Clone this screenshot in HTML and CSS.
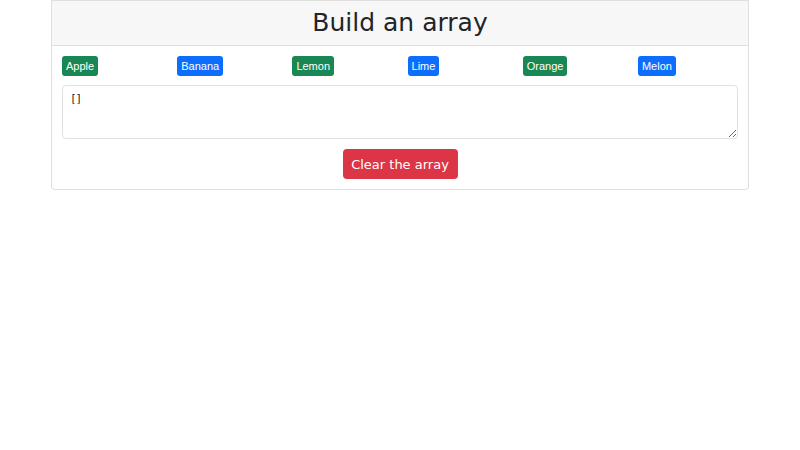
FILE: index.html
```html
<!DOCTYPE html>
<html lang="en">
<head>
  <meta charset="UTF-8" />
  <meta name="viewport" content="width=device-width, initial-scale=1.0"/>
  <title>Build an array</title>
  <link rel="stylesheet" href="styles.css">
</head>
<body>
  <div class="container">
    <div class="card">
      <div class="card-header">
        <h3 class="title">Build an array</h3>
      </div>
      <div class="card-body">
        <div class="fruits">
          <div class="fruit-col"><button class="fruit-btn green">Apple</button></div>
          <div class="fruit-col"><button class="fruit-btn blue">Banana</button></div>
          <div class="fruit-col"><button class="fruit-btn green">Lemon</button></div>
          <div class="fruit-col"><button class="fruit-btn blue">Lime</button></div>
          <div class="fruit-col"><button class="fruit-btn green">Orange</button></div>
          <div class="fruit-col"><button class="fruit-btn blue">Melon</button></div>
        </div>
        <textarea class="output" id="output" readonly>[]</textarea>
        <div class="actions">
          <button class="btn-clear" id="clearBtn">Clear the array</button>
        </div>
      </div>
    </div>
  </div>
  <script>
    let fruits = [];
    const output = document.getElementById("output");

    function render() {
      output.value = JSON.stringify(fruits);
    }

    document.querySelectorAll(".fruit-btn").forEach((btn) => {
      btn.addEventListener("click", () => {
        fruits.push(btn.textContent);
        render();
      });
    });

    document.getElementById("clearBtn").addEventListener("click", () => {
      fruits = [];
      render();
    });
  </script>
</body>
</html>
```

FILE: styles.css
```css
* { margin: 0; padding: 0; box-sizing: border-box; }
body {
  font-family: "DejaVu Sans", sans-serif;
  color: #212529;
  background: #fff;
}
.container {
  width: 698px;
  margin: 0 auto;
}
.card {
  border: 1px solid #dfdfdf;
  border-top: none;
  border-radius: 0 0 4px 4px;
}
.card-header {
  background: #f7f7f7;
  border-top: 1px solid #dfdfdf;
  border-bottom: 1px solid #dfdfdf;
  height: 46px;
  display: flex;
  align-items: center;
  justify-content: center;
}
.title {
  font-size: 25px;
  font-weight: 400;
  line-height: 1.2;
}
.card-body {
  padding: 9px 10px 10px;
}
.fruits {
  display: grid;
  grid-template-columns: repeat(6, 115.2px);
}
.fruit-btn {
  font-family: "Liberation Sans", Arial, sans-serif;
  font-size: 11px;
  color: #fff;
  border: none;
  border-radius: 3px;
  height: 20px;
  padding: 0 4px;
  cursor: pointer;
}
.green { background: #198754; }
.blue { background: #0d6efd; }
.output {
  display: block;
  width: 100%;
  height: 54px;
  margin-top: 9px;
  padding: 6px 7px;
  font-family: "DejaVu Sans Mono", monospace;
  font-size: 11px;
  letter-spacing: -1px;
  color: #212529;
  border: 1px solid #dee2e6;
  border-radius: 4px;
  resize: vertical;
}
.actions {
  display: flex;
  justify-content: center;
  margin-top: 10px;
}
.btn-clear {
  font-family: "DejaVu Sans", sans-serif;
  font-size: 13px;
  color: #fff;
  background: #dc3545;
  border: none;
  border-radius: 4px;
  width: 115px;
  height: 30px;
  cursor: pointer;
}
```
